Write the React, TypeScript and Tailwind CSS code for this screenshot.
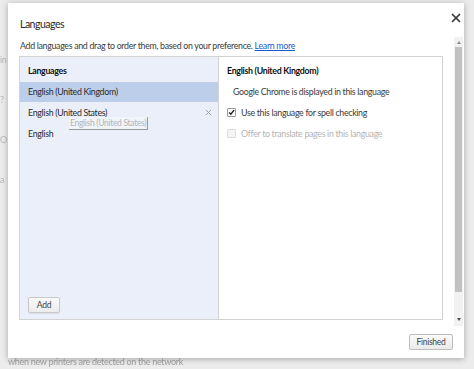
import { X } from 'lucide-react';

const font = { fontFamily: 'Lato, "Noto Sans", sans-serif' };

function Checkbox({ checked, disabled }: { checked?: boolean; disabled?: boolean }) {
  return (
    <div
      className={
        'w-[9px] h-[9px] border rounded-[1px] flex items-center justify-center ' +
        (disabled ? 'border-[#dcdcdc] bg-[#f4f4f4]' : 'border-[#9a9a9a] bg-[#f7f7f7]')
      }
    >
      {checked && (
        <svg width="9" height="9" viewBox="0 0 9 9">
          <path d="M1.5 4.6 L3.6 6.8 L7.8 1.4" stroke="#222" strokeWidth="1.8" fill="none" />
        </svg>
      )}
    </div>
  );
}

function Scrollbar() {
  return (
    <div className="w-[9px] mr-[1px] bg-[#f1f1f1] flex flex-col items-center">
      <div className="h-[10px] flex items-center justify-center">
        <div className="w-0 h-0 border-l-[2px] border-r-[2px] border-b-[3px] border-l-transparent border-r-transparent border-b-[#8a8a8a]" />
      </div>
      <div className="w-[7px] h-[245px] bg-[#c1c1c1]" />
      <div className="flex-1" />
      <div className="h-[14px] flex items-center justify-center">
        <div className="w-0 h-0 border-l-[2px] border-r-[2px] border-t-[3px] border-l-transparent border-r-transparent border-t-[#505050]" />
      </div>
    </div>
  );
}

export default function App() {
  return (
    <div className="relative w-[474px] h-[369px] bg-[#ececec] overflow-hidden tracking-[-0.3px]" style={font}>
      {/* page behind the dialog */}
      <div className="absolute left-[8px] top-[355px] text-[9px] text-[#a0a0a0] blur-[0.5px] whitespace-nowrap">
        when new printers are detected on the network
      </div>
      <div className="absolute left-0 top-[40px] text-[9px] text-[#b8b8b8] blur-[0.6px] leading-[40px] flex flex-col">
        <span>in</span>
        <span>?</span>
        <span>O</span>
        <span>a</span>
      </div>

      <div className="absolute left-[8px] top-[3px] w-[456px] h-[355px] bg-white shadow-[0_1px_6px_rgba(0,0,0,0.3)] flex flex-col text-[#333]">
        <div className="h-[34px] flex items-start justify-between pl-[12px] pr-[1px]">
          <div className="pt-[13px] text-[10.5px] leading-[16px] tracking-[-0.5px] text-[#2a2a2a]">Languages</div>
          <X className="mt-[8px] w-[14px] h-[14px] text-[#3a3a3a]" strokeWidth={3} />
        </div>

        <div className="flex h-[289px]">
          <div className="flex-1 pl-[11px] pr-[2px]">
            <div className="h-[19px] pl-[1px] pt-[3px] text-[8.8px] leading-[12px] text-[#3a3a3a]">
              Add languages and drag to order them, based on your preference.{' '}
              <span className="text-[#1a5bc9] underline">Learn more</span>
            </div>
            <div className="h-[264px] w-[424px] border border-[#d3d3d3] flex">
              <div className="relative w-[199px] bg-[#ebeff9] border-r border-[#d3d3d3] flex flex-col text-[8.8px]">
                <div className="h-[25px] pl-[8px] pt-[7px] font-bold text-[#111]">Languages</div>
                <div className="h-[20px] pl-[8px] flex items-center bg-[#bccee9] text-[#2a2a2a]">
                  English (United Kingdom)
                </div>
                <div className="h-[21px] pl-[8px] pr-[5px] flex items-center justify-between text-[#2a2a2a]">
                  <span>English (United States)</span>
                  <X className="w-[9px] h-[9px] text-[#9a9a9a]" strokeWidth={2.5} />
                </div>
                <div className="h-[21px] pl-[8px] flex items-center text-[#2a2a2a]">English</div>
                <div className="flex-1" />
                <div className="pl-[8px] pb-[6px]">
                  <button className="h-[16px] w-[32px] border border-[#c8c8c8] rounded-[2px] bg-gradient-to-b from-[#fafafa] to-[#ececec] text-[8.5px] text-[#444] shadow-[0_1px_1px_rgba(0,0,0,0.08)]">
                    Add
                  </button>
                </div>
                <div className="absolute left-[49px] top-[60px] px-[1px] h-[13px] flex items-center border-r border-b border-[#999] bg-[#f4f6fb]/60 text-[8.5px] text-[#b4b4b4] whitespace-nowrap">
                  English (United States)
                </div>
              </div>
              <div className="flex-1 flex flex-col text-[8.8px]">
                <div className="h-[25px] pl-[8px] pt-[7px] font-bold text-[#111]">English (United Kingdom)</div>
                <div className="h-[20px] pl-[14px] flex items-center text-[#3a3a3a]">
                  Google Chrome is displayed in this language
                </div>
                <div className="h-[21px] pl-[8px] flex items-center gap-[5px] text-[#3a3a3a]">
                  <Checkbox checked />
                  <span>Use this language for spell checking</span>
                </div>
                <div className="h-[21px] pl-[8px] flex items-center gap-[5px] text-[#b4b4b4]">
                  <Checkbox disabled />
                  <span>Offer to translate pages in this language</span>
                </div>
              </div>
            </div>
          </div>
          <Scrollbar />
        </div>

        <div className="flex-1 flex justify-end items-start pr-[11px] pt-[8px]">
          <button className="h-[16px] w-[44px] border border-[#bdbdbd] rounded-[2px] bg-gradient-to-b from-[#fafafa] to-[#ebebeb] text-[8.5px] text-[#444]">
            Finished
          </button>
        </div>
      </div>
    </div>
  );
}
